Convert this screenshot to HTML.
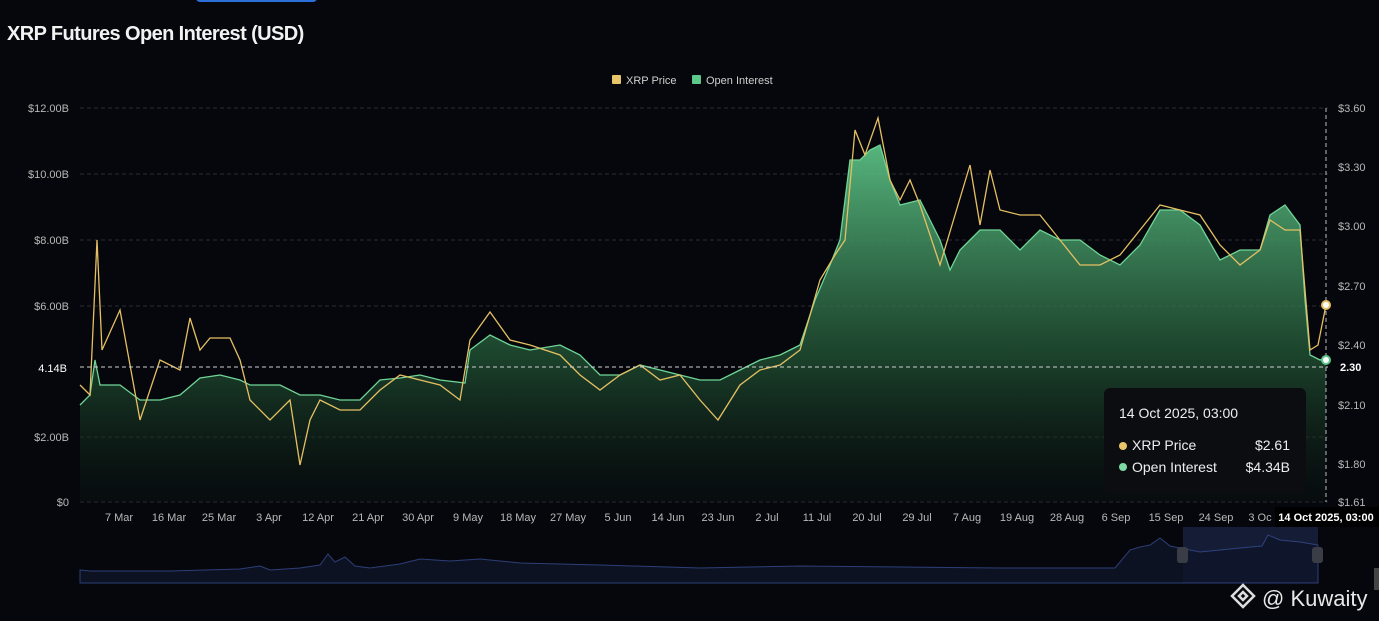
<!DOCTYPE html>
<html><head><meta charset="utf-8"><style>
html,body{margin:0;padding:0;background:#06070c;width:1379px;height:621px;overflow:hidden;font-family:"Liberation Sans",sans-serif;}
.t{position:absolute;left:7px;top:23px;color:#f2f2f2;font-size:20px;font-weight:bold;letter-spacing:-0.6px}
</style></head><body>
<div style="position:absolute;left:196px;top:-6px;width:121px;height:8px;background:#2d6fd9;border-radius:4px"></div>
<div class="t">XRP Futures Open Interest (USD)</div>
<svg width="1379" height="621" style="position:absolute;left:0;top:0" font-family="Liberation Sans, sans-serif">
<defs>
<linearGradient id="g" x1="0" y1="0" x2="0" y2="1">
<stop offset="0" stop-color="#5fc98a" stop-opacity="0.9"/>
<stop offset="0.6" stop-color="#245a38" stop-opacity="0.7"/>
<stop offset="1" stop-color="#0b1a12" stop-opacity="0.25"/>
</linearGradient>
</defs>
<g font-size="11" fill="#cfcfcf">
<rect x="612" y="75" width="9" height="9" fill="#e8c46a" rx="1"/><text x="626" y="84">XRP Price</text>
<rect x="692" y="75" width="9" height="9" fill="#5cc88a" rx="1"/><text x="706" y="84">Open Interest</text>
</g>
<g stroke="#2a2d33" stroke-dasharray="4,3" stroke-width="1">
<line x1="80" y1="108" x2="1328" y2="108"/><line x1="80" y1="174" x2="1328" y2="174"/>
<line x1="80" y1="240" x2="1328" y2="240"/><line x1="80" y1="306" x2="1328" y2="306"/>
<line x1="80" y1="437" x2="1328" y2="437"/><line x1="80" y1="502" x2="1328" y2="502"/>
</g>
<g font-size="11" fill="#b8b8b8" text-anchor="end">
<text x="69" y="112">$12.00B</text><text x="69" y="178">$10.00B</text><text x="69" y="244">$8.00B</text>
<text x="69" y="310">$6.00B</text><text x="69" y="441">$2.00B</text><text x="69" y="506">$0</text>
<text x="67" y="372" fill="#fff">4.14B</text>
</g>
<g font-size="11" fill="#b8b8b8">
<text x="1338" y="112">$3.60</text><text x="1338" y="171">$3.30</text><text x="1338" y="230">$3.00</text>
<text x="1338" y="290">$2.70</text><text x="1338" y="349">$2.40</text><text x="1338" y="409">$2.10</text>
<text x="1338" y="468">$1.80</text><text x="1338" y="506">$1.61</text>
<text x="1340" y="371" fill="#fff" font-weight="bold">2.30</text>
</g>
<path fill="url(#g)" d="M80,405 L90,395 L95,360 L100,385 L120,385 L140,400 L160,400 L180,395 L200,378 L220,375 L240,380 L250,385 L280,385 L300,395 L320,395 L340,400 L360,400 L380,380 L400,378 L420,375 L440,380 L465,383 L470,350 L490,335 L510,345 L530,350 L560,345 L580,355 L600,375 L620,375 L640,365 L660,370 L680,375 L700,380 L720,380 L740,370 L760,360 L780,355 L800,345 L815,300 L830,265 L840,240 L850,160 L860,160 L870,150 L880,145 L890,180 L900,205 L920,200 L940,240 L950,270 L960,250 L970,240 L980,230 L1000,230 L1020,250 L1040,230 L1060,240 L1080,240 L1100,255 L1120,265 L1140,245 L1160,210 L1180,210 L1200,225 L1220,260 L1240,250 L1260,250 L1270,215 L1285,205 L1300,225 L1305,300 L1310,355 L1320,360 L1326,358 L1326,502 L80,502 Z"/>
<path fill="none" stroke="#6fd597" stroke-width="1.3" d="M80,405 L90,395 L95,360 L100,385 L120,385 L140,400 L160,400 L180,395 L200,378 L220,375 L240,380 L250,385 L280,385 L300,395 L320,395 L340,400 L360,400 L380,380 L400,378 L420,375 L440,380 L465,383 L470,350 L490,335 L510,345 L530,350 L560,345 L580,355 L600,375 L620,375 L640,365 L660,370 L680,375 L700,380 L720,380 L740,370 L760,360 L780,355 L800,345 L815,300 L830,265 L840,240 L850,160 L860,160 L870,150 L880,145 L890,180 L900,205 L920,200 L940,240 L950,270 L960,250 L970,240 L980,230 L1000,230 L1020,250 L1040,230 L1060,240 L1080,240 L1100,255 L1120,265 L1140,245 L1160,210 L1180,210 L1200,225 L1220,260 L1240,250 L1260,250 L1270,215 L1285,205 L1300,225 L1305,300 L1310,355 L1320,360 L1326,358"/>
<path fill="none" stroke="#e5c063" stroke-width="1.3" d="M80,385 L90,395 L97,240 L102,350 L120,310 L140,420 L160,360 L180,370 L190,318 L200,350 L210,338 L230,338 L240,360 L250,400 L270,420 L290,400 L300,465 L310,420 L320,400 L340,410 L360,410 L380,390 L400,375 L420,380 L440,385 L460,400 L470,340 L490,312 L510,340 L530,345 L560,355 L580,375 L600,390 L620,375 L640,365 L660,380 L680,375 L700,400 L718,420 L740,385 L760,370 L780,365 L800,350 L820,280 L835,255 L845,240 L855,130 L865,155 L878,118 L890,180 L900,200 L910,180 L920,205 L940,265 L955,215 L970,165 L980,225 L990,170 L1000,210 L1020,215 L1040,215 L1060,240 L1080,265 L1100,265 L1120,255 L1140,230 L1160,205 L1180,210 L1200,215 L1220,245 L1240,265 L1260,250 L1270,220 L1285,230 L1300,230 L1310,350 L1318,345 L1326,305"/>
<line x1="80" y1="367" x2="1328" y2="367" stroke="#cfcfcf" stroke-dasharray="4,3"/>
<line x1="1326" y1="108" x2="1326" y2="502" stroke="#bbb" stroke-dasharray="4,3"/>
<circle cx="1326" cy="305" r="4" fill="#fff" stroke="#e5c063" stroke-width="2"/>
<circle cx="1326" cy="360" r="4" fill="#fff" stroke="#5cc88a" stroke-width="2"/>
<rect x="1104" y="388" width="202" height="106" rx="6" fill="#0c0d11"/>
<g fill="#eee" font-size="14">
<text x="1119" y="418">14 Oct 2025, 03:00</text>
<circle cx="1123" cy="446" r="4" fill="#e8c46a"/><text x="1132" y="450">XRP Price</text><text x="1290" y="450" text-anchor="end">$2.61</text>
<circle cx="1123" cy="467" r="4" fill="#7ed9a3"/><text x="1132" y="472">Open Interest</text><text x="1290" y="472" text-anchor="end">$4.34B</text>
</g>
<g font-size="11" fill="#b8b8b8" text-anchor="middle">
<text x="119" y="521">7 Mar</text><text x="169" y="521">16 Mar</text><text x="219" y="521">25 Mar</text>
<text x="269" y="521">3 Apr</text><text x="318" y="521">12 Apr</text><text x="368" y="521">21 Apr</text>
<text x="418" y="521">30 Apr</text><text x="468" y="521">9 May</text><text x="518" y="521">18 May</text>
<text x="568" y="521">27 May</text><text x="618" y="521">5 Jun</text><text x="668" y="521">14 Jun</text>
<text x="718" y="521">23 Jun</text><text x="767" y="521">2 Jul</text><text x="817" y="521">11 Jul</text>
<text x="867" y="521">20 Jul</text><text x="917" y="521">29 Jul</text><text x="967" y="521">7 Aug</text>
<text x="1017" y="521">19 Aug</text><text x="1067" y="521">28 Aug</text><text x="1116" y="521">6 Sep</text>
<text x="1166" y="521">15 Sep</text><text x="1216" y="521">24 Sep</text><text x="1260" y="521">3 Oc</text>
</g>
<rect x="1275" y="507" width="104" height="20" fill="#000"/>
<text x="1326" y="521" font-size="11" fill="#fff" font-weight="bold" text-anchor="middle">14 Oct 2025, 03:00</text>
<rect x="1183" y="527" width="135" height="56" fill="#141c36"/>
<path fill="#0f1428" stroke="#34488a" stroke-width="1" d="M80,570 L90,571 L170,571 L240,569 L260,566 L270,570 L300,568 L320,565 L328,554 L335,562 L345,557 L355,566 L370,568 L400,564 L420,559 L450,561 L480,559 L520,563 L600,565 L700,568 L800,566 L900,567 L1000,568 L1115,568 L1130,550 L1140,547 L1150,545 L1160,538 L1170,546 L1180,548 L1200,552 L1220,550 L1240,548 L1262,546 L1268,535 L1280,540 L1300,542 L1318,545 L1318,583 L80,583 Z" opacity="0.85"/>
<rect x="1177" y="547" width="11" height="16" rx="3" fill="#3a3d45"/>
<rect x="1312" y="547" width="11" height="16" rx="3" fill="#3a3d45"/>
<rect x="1374" y="568" width="5" height="22" fill="#444"/>
<g transform="translate(1243,596)" fill="none" stroke="#ddd" stroke-width="2.5">
<path d="M0,-11 L11,0 L0,11 L-11,0 Z M0,-4 L4,0 L0,4 L-4,0 Z"/>
</g>
<text x="1262" y="606" font-size="22" fill="#e8e8e8">@ Kuwaity</text>
</svg>
</body></html>
